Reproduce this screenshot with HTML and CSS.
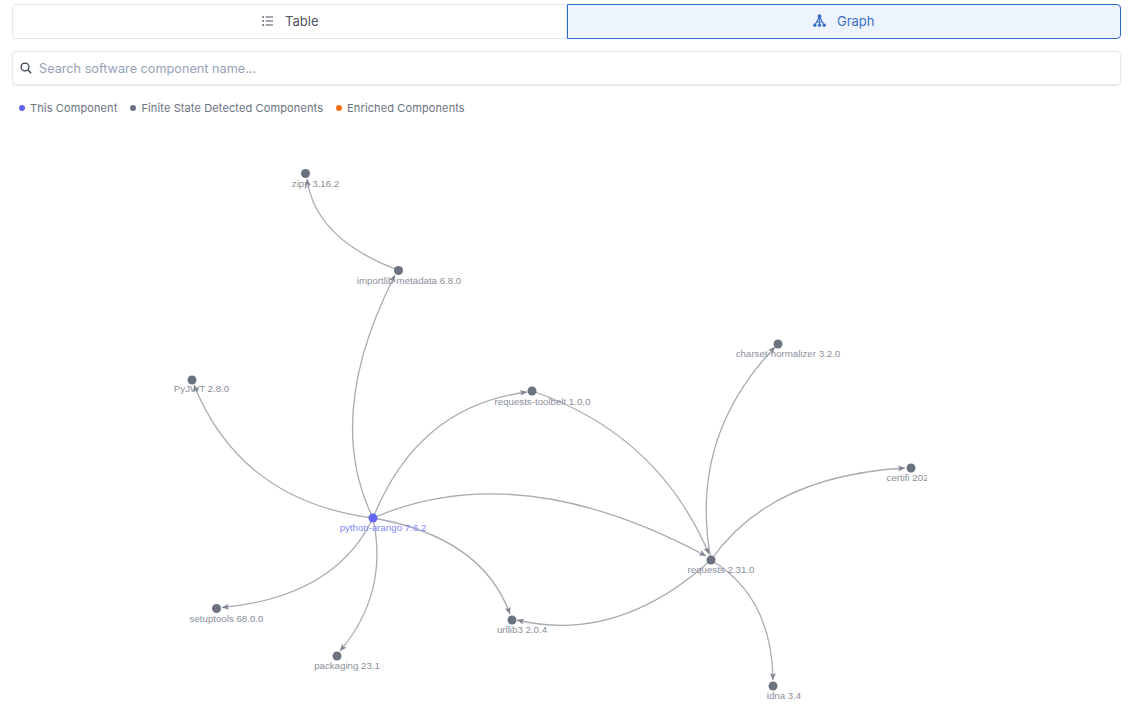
FILE: index.html
```html
<!DOCTYPE html>
<html lang="en">
<head>
  <meta charset="UTF-8">
  <meta name="viewport" content="width=device-width, initial-scale=1.0">
  <title>Software Components</title>
  <link rel="stylesheet" href="styles.css">
</head>
<body>
  <div class="tabs">
    <button class="tab tab-table">
      <svg class="icon-table" viewBox="0 0 11 10" fill="none" stroke="currentColor" stroke-width="1.2">
        <path d="M3.500 1h7.500M3.500 5h7.500M3.500 9h7.500"/>
        <path d="M0.300 1h1.700M0.300 5h1.700M0.300 9h1.700" stroke-width="1.500"/>
      </svg>
      Table
    </button>
    <button class="tab active">
      <svg class="icon-graph" viewBox="0 0 13 13" fill="none" stroke="currentColor" stroke-width="1.200">
        <path d="M6.500 2.500L2 11M6.500 2.500L11 11M6.500 2.500V11M3.800 8h5.400"/>
        <circle cx="6.500" cy="2.200" r="1.900" fill="currentColor" stroke="none"/>
        <circle cx="1.800" cy="11.200" r="1.700" fill="currentColor" stroke="none"/>
        <circle cx="6.500" cy="11.200" r="1.700" fill="currentColor" stroke="none"/>
        <circle cx="11.200" cy="11.200" r="1.700" fill="currentColor" stroke="none"/>
      </svg>
      Graph
    </button>
  </div>

  <div class="search">
    <svg class="search-icon" viewBox="0 0 12 12" fill="none" stroke="currentColor" stroke-width="1.300">
      <circle cx="5" cy="5" r="3.900"/>
      <path d="M8 8l3.200 3.200"/>
    </svg>
    <span class="search-text">Search software component name...</span>
  </div>

  <div class="legend">
    <div class="legend-item"><span class="dot dot-this"></span>This Component</div>
    <div class="legend-item"><span class="dot dot-detected"></span>Finite State Detected Components</div>
    <div class="legend-item"><span class="dot dot-enriched"></span>Enriched Components</div>
  </div>

  <svg class="graph" width="927" height="589" viewBox="0 120 927 589">
    <defs>
      <marker id="arrow" markerUnits="userSpaceOnUse" markerWidth="10" markerHeight="8" viewBox="0 -4 10 8" refX="8" refY="0" orient="auto">
        <path d="M1 -3L8 0L1 3L2.800 0z" fill="#7d828e"/>
      </marker>
    </defs>

    <g class="edges">
      <path d="M398 270Q315 239 307 179" marker-end="url(#arrow)"/>
      <path d="M373 518Q323 416 395 275" marker-end="url(#arrow)"/>
      <path d="M373 518Q241 501 194 385" marker-end="url(#arrow)"/>
      <path d="M373 518Q418 406 527 392" marker-end="url(#arrow)"/>
      <path d="M532 391Q658 434 709 554" marker-end="url(#arrow)"/>
      <path d="M373 518Q518 455 706 556" marker-end="url(#arrow)"/>
      <path d="M711 560Q688 438 775 347" marker-end="url(#arrow)"/>
      <path d="M711 560Q769 476 905 468" marker-end="url(#arrow)"/>
      <path d="M711 560Q772 597 773 680" marker-end="url(#arrow)"/>
      <path d="M711 560Q618 644 517 620" marker-end="url(#arrow)"/>
      <path d="M373 518Q482 537 510 614" marker-end="url(#arrow)"/>
      <path d="M373 518Q335 597 222 607.500" marker-end="url(#arrow)"/>
      <path d="M373 518Q389 593 340 651" marker-end="url(#arrow)"/>
    </g>

    <g class="nodes">
      <circle cx="305.500" cy="173.500" r="4.500"/>
      <circle cx="398.500" cy="270.500" r="4.500"/>
      <circle cx="192" cy="380" r="4.500"/>
      <circle cx="532" cy="391" r="4.500"/>
      <circle cx="778" cy="344" r="4.500"/>
      <circle cx="911" cy="468" r="4.500"/>
      <circle cx="711" cy="560" r="4.500"/>
      <circle cx="216.500" cy="608.500" r="4.500"/>
      <circle cx="337" cy="656" r="4.500"/>
      <circle cx="512" cy="620" r="4.500"/>
      <circle cx="773" cy="686" r="4.500"/>
      <circle class="node-root" cx="373" cy="518" r="4.500"/>
    </g>

    <g class="labels">
      <text x="315.500" y="186.700">zipp 3.16.2</text>
      <text x="409" y="283.700">importlib-metadata 6.8.0</text>
      <text x="201.500" y="391.700">PyJWT 2.8.0</text>
      <text x="542.500" y="404.700">requests-toolbelt 1.0.0</text>
      <text x="788" y="356.700">charset-normalizer 3.2.0</text>
      <text x="921" y="480.700">certifi 2023.7.22</text>
      <text x="721" y="572.700">requests 2.31.0</text>
      <text x="226.500" y="621.700">setuptools 68.0.0</text>
      <text x="347" y="668.700">packaging 23.1</text>
      <text x="522" y="632.700">urllib3 2.0.4</text>
      <text x="784" y="698.700">idna 3.4</text>
      <text class="label-root" x="383" y="530.700">python-arango 7.6.2</text>
    </g>
  </svg>
</body>
</html>
```
FILE: styles.css
```css
* {
  box-sizing: border-box;
}
html, body {
  height: 100%;
}
body {
  margin: 0;
  padding: 4px 14px 0 12px;
  background: #fff;
  font-family: 'Inter', sans-serif;
  overflow: hidden;
}
.tabs {
  display: flex;
  height: 35px;
}
.tab {
  flex: 1;
  display: flex;
  align-items: center;
  justify-content: center;
  gap: 11px;
  background: #fff;
  border: 1px solid #e2e8f0;
  border-radius: 4px 0 0 4px;
  color: #4b5563;
  font-family: inherit;
  font-size: 13px;
  padding: 0 0 2px;
}
.tab-table {
  gap: 12px;
}
.tab.active {
  background: #edf4fe;
  border-color: #2f6bcb;
  border-radius: 0 4px 4px 0;
  color: #3b6fc9;
}
.icon-table {
  width: 11px;
  height: 10px;
  margin-left: 2px;
}
.icon-graph {
  width: 13px;
  height: 13px;
}
.search {
  display: flex;
  align-items: center;
  gap: 7px;
  height: 34px;
  margin-top: 12px;
  padding-left: 7px;
  border: 1px solid #e5e7eb;
  border-radius: 4px;
  box-shadow: 0 1px 2px rgba(148, 163, 184, 0.25);
}
.search-icon {
  width: 12px;
  height: 12px;
  color: #374151;
}
.search-text {
  color: #94a3b8;
  font-size: 12.700px;
}
.legend {
  display: flex;
  gap: 13px;
  margin-top: 16px;
  padding-left: 7px;
  height: 14px;
  align-items: center;
}
.legend-item {
  display: flex;
  align-items: center;
  gap: 5px;
  color: #6b7280;
  font-size: 11px;
  letter-spacing: 0.120px;
}
.dot {
  width: 6px;
  height: 6px;
  border-radius: 50%;
}
.dot-this { background: #6366f1; }
.dot-detected { background: #6b7280; }
.dot-enriched { background: #f97316; }

.graph {
  display: block;
  margin: 5px 0 0 -12px;
}
.edges path {
  fill: none;
  stroke: #a9abb4;
  stroke-width: 1.300;
}
.nodes circle {
  fill: #6b7280;
}
.nodes .node-root {
  fill: #6366f1;
}
.labels text {
  font-family: 'Liberation Sans', Arial, sans-serif;
  font-size: 9.700px;
  fill: #8a8f9b;
  text-anchor: middle;
}
.labels .label-root {
  fill: #8286f8;
}
```
